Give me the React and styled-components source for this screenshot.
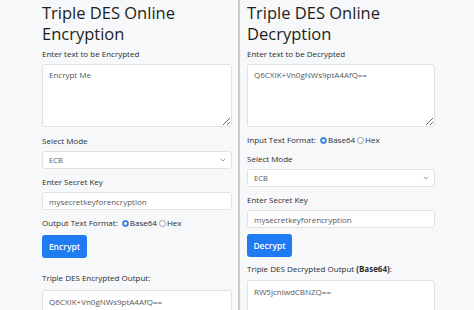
import React from "react";
import styled, { createGlobalStyle } from "styled-components";
import { ChevronDown } from "lucide-react";

const GlobalStyle = createGlobalStyle`
  html, body {
    margin: 0;
    padding: 0;
    background: #f7f8f9;
    height: 310px;
    overflow: hidden;
  }
  body {
    font-family: "Open Sans", "Liberation Sans", sans-serif;
    color: #212529;
  }
  * { box-sizing: border-box; }
`;

const Page = styled.div`
  display: grid;
  grid-template-columns: 238px 1fr;
  height: 310px;
`;

const Column = styled.section`
  display: flex;
  flex-direction: column;
  padding: ${(p) => (p.$right ? "2px 39px 0 7px" : "2px 6px 0 42px")};
  border-left: ${(p) => (p.$right ? "2px solid #c9cbcd" : "none")};
`;

const Title = styled.h1`
  margin: 0;
  font-size: 16.5px;
  line-height: 21px;
  font-weight: 500;
  color: #1d1f21;
`;

const Label = styled.div`
  font-size: 8px;
  line-height: 14px;
  height: 14px;
  font-weight: 500;
  color: #2b2d30;
  margin: ${(p) => p.$m || "6px 0 3px"};
  display: flex;
  align-items: center;
  white-space: nowrap;
`;

const TextBox = styled.textarea`
  display: block;
  width: 100%;
  height: 63px;
  resize: vertical;
  border: 1px solid #dfe2e5;
  border-radius: 3px;
  background: #fff;
  padding: 4px 6px;
  font-family: inherit;
  font-size: 8px;
  color: #55595d;
  outline: none;
`;

const SelectBox = styled.div`
  display: flex;
  align-items: center;
  justify-content: space-between;
  height: 18px;
  padding: 0 4px 0 6px;
  border: 1px solid #dfe2e5;
  border-radius: 3px;
  background: #fff;
  font-size: 7.5px;
  color: #55595d;
`;

const Field = styled.div`
  display: flex;
  align-items: center;
  height: 18px;
  padding: 0 6px;
  border: 1px solid #dfe2e5;
  border-radius: 3px;
  background: #fff;
  font-size: 8px;
  color: #55595d;
`;

const Radio = styled.span`
  display: inline-block;
  width: 7px;
  height: 7px;
  border-radius: 50%;
  margin: 0 1px 0 2px;
  border: 1px solid ${(p) => (p.$on ? "#2b7de9" : "#9aa0a6")};
  background: ${(p) =>
    p.$on ? "radial-gradient(circle, #fff 0 1.2px, #2b7de9 1.6px)" : "#fff"};
`;

const Button = styled.button`
  align-self: flex-start;
  height: 23px;
  width: 45px;
  margin-top: ${(p) => p.$mt || "2px"};
  border: none;
  border-radius: 3px;
  background: #1f7bf2;
  color: #fff;
  font-family: inherit;
  font-size: 8.5px;
  font-weight: 600;
  padding: 0;
`;

const Output = styled.div`
  height: 40px;
  padding: 5px 6px;
  border: 1px solid #dfe2e5;
  border-radius: 3px;
  background: #fff;
  font-size: 8px;
  color: #55595d;
`;

const Format = ({ label }) => (
  <>
    {label}&nbsp;
    <Radio $on />
    Base64
    <Radio />
    Hex
  </>
);

const Select = () => (
  <SelectBox>
    ECB
    <ChevronDown size={8} strokeWidth={2} color="#6c757d" />
  </SelectBox>
);

export default function App() {
  return (
    <>
      <GlobalStyle />
      <Page>
        <Column>
          <Title>
            Triple DES Online
            <br />
            Encryption
          </Title>
          <Label $m="3px 0 3px">Enter text to be Encrypted</Label>
          <TextBox defaultValue="Encrypt Me" />
          <Label $m="7px 0 3px">Select Mode</Label>
          <Select />
          <Label>Enter Secret Key</Label>
          <Field>mysecretkeyforencryption</Field>
          <Label>
            <Format label="Output Text Format:" />
          </Label>
          <Button>Encrypt</Button>
          <Label $m="13px 0 5px">Triple DES Encrypted Output:</Label>
          <Output>Q6CXIK+Vn0gNWs9ptA4AfQ==</Output>
        </Column>
        <Column $right>
          <Title>
            Triple DES Online
            <br />
            Decryption
          </Title>
          <Label $m="3px 0 3px">Enter text to be Decrypted</Label>
          <TextBox defaultValue="Q6CXIK+Vn0gNWs9ptA4AfQ==" />
          <Label>
            <Format label="Input Text Format:" />
          </Label>
          <Label $m="2px 0 3px">Select Mode</Label>
          <Select />
          <Label>Enter Secret Key</Label>
          <Field>mysecretkeyforencryption</Field>
          <Button $mt="6px">Decrypt</Button>
          <Label $m="5px 0 4px">
            Triple DES Decrypted Output&nbsp;<b>(Base64)</b>:
          </Label>
          <Output>RW5jcnlwdCBNZQ==</Output>
        </Column>
      </Page>
    </>
  );
}
